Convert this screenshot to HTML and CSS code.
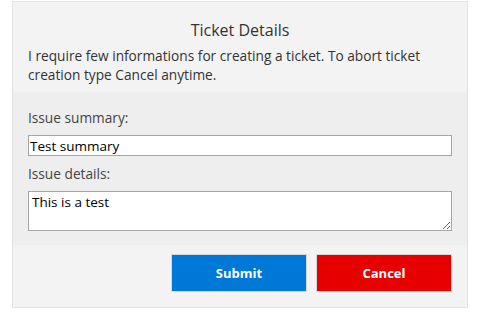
FILE: index.html
```html
<!DOCTYPE html>
<html>
<head>
<meta charset="utf-8">
<link rel="stylesheet" href="styles.css">
</head>
<body>
<div class="card">
  <div class="header">
    <div class="title">Ticket Details</div>
    <div class="desc">I require few informations for creating a ticket. To abort ticket creation type Cancel anytime.</div>
  </div>
  <div class="form">
    <label class="label">Issue summary:</label>
    <input class="input" type="text" value="Test summary">
    <label class="label">Issue details:</label>
    <textarea class="textarea">This is a test</textarea>
  </div>
  <div class="actions">
    <button class="btn btn-submit">Submit</button>
    <button class="btn btn-cancel">Cancel</button>
  </div>
</div>
</body>
</html>
```
FILE: styles.css
```css
html, body {
  margin: 0;
  padding: 0;
  background: #ffffff;
}
body {
  font-family: "Open Sans", "Noto Sans", sans-serif;
  color: #333333;
}
.card {
  margin: 1px 0 0 12px;
  width: 456px;
  box-sizing: border-box;
  background: #f3f3f3;
  border: 1px solid #e3e3e3;
}
.header {
  padding: 16px 15px 8px 15px;
}
.title {
  text-align: center;
  font-size: 16px;
  line-height: 24px;
  color: #333;
}
.desc {
  margin-top: 4px;
  font-size: 13.7px;
  line-height: 19px;
  color: #333;
}
.form {
  background: #eeeeee;
  padding: 16px 15px 14px 15px;
  display: flex;
  flex-direction: column;
}
.label {
  font-size: 13.7px;
  line-height: 19px;
  color: #444;
}
.input {
  margin: 8px 0 8px 0;
  height: 21px;
  box-sizing: border-box;
  border: 1px solid #a6a6a6;
  background: #fff;
  font-family: inherit;
  font-size: 13.5px;
  padding: 0 1px;
  color: #000;
  outline: none;
}
.textarea {
  margin-top: 8px;
  height: 40px;
  box-sizing: border-box;
  border: 1px solid #a6a6a6;
  background: #fff;
  font-family: inherit;
  font-size: 13.5px;
  line-height: 17px;
  padding: 2px 3px;
  color: #000;
  outline: none;
}
.actions {
  display: flex;
  justify-content: flex-end;
  gap: 9px;
  padding: 9px 15px 15px 15px;
}
.btn {
  width: 136px;
  height: 38px;
  border: 1px solid #d8d8d8;
  font-family: inherit;
  font-weight: bold;
  font-size: 13px;
  color: #fff;
  padding: 0;
}
.btn-submit {
  background: #0078d7;
}
.btn-cancel {
  background: #e60000;
}
```
